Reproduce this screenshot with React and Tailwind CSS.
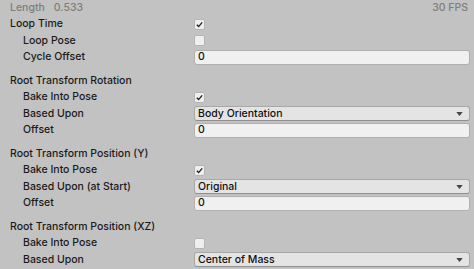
function CheckBox({ checked }) {
  return (
    <div className="w-[11px] h-[11px] rounded-[2px] bg-[#efefef] border border-[#b4b4b4] flex items-center justify-center">
      {checked && (
        <svg viewBox="0 0 10 10" className="w-[9px] h-[9px]">
          <path d="M2 5.4 L4 7.3 L8 2.6" fill="none" stroke="#1e1e1e" strokeWidth="1.5" />
        </svg>
      )}
    </div>
  )
}

function TextField({ value }) {
  return (
    <div className="h-[15px] w-full rounded-[3px] bg-[#f0f0f0] border border-[#b0b0b0] flex items-center pl-[3px] text-[#111]">
      {value}
    </div>
  )
}

function Dropdown({ value }) {
  return (
    <div className="h-[15px] w-full rounded-[3px] bg-[#e4e4e4] border border-[#a8a8a8] border-b-[#8f8f8f] flex items-center justify-between pl-[3px] pr-[6px] text-[#111]">
      <span>{value}</span>
      <svg viewBox="0 0 8 5" className="w-[7px] h-[4px]">
        <path d="M0 0 L8 0 L4 5 Z" fill="#444" />
      </svg>
    </div>
  )
}

function Row({ label, indent, children }) {
  return (
    <div className="h-[16.5px] flex items-center">
      <div className={(indent ? 'pl-[23px]' : 'pl-[10px]') + ' w-[194px] shrink-0 text-[#1a1a1a] whitespace-nowrap'}>
        {label}
      </div>
      <div className="flex-1 pr-[4px] flex items-center">{children}</div>
    </div>
  )
}

export default function App() {
  return (
    <div
      className="w-[474px] h-[269px] bg-[#c2c2c2] overflow-hidden text-[10.5px] font-medium leading-none"
      style={{ fontFamily: 'Inter, "Noto Sans", sans-serif' }}
    >
      <div className="mt-[-0.5px]">
        {/* length header */}
        <div className="h-[16.5px] flex items-center justify-between pl-[10px] pr-[6px] text-[#7e7e7e]">
          <div className="flex gap-[9px]">
            <span>Length</span>
            <span>0.533</span>
          </div>
          <span>30 FPS</span>
        </div>

        <Row label="Loop Time"><CheckBox checked /></Row>
        <Row label="Loop Pose" indent><CheckBox /></Row>
        <Row label="Cycle Offset" indent><TextField value="0" /></Row>

        <div className="mt-[7px]">
          <Row label="Root Transform Rotation" />
          <Row label="Bake Into Pose" indent><CheckBox checked /></Row>
          <Row label="Based Upon" indent><Dropdown value="Body Orientation" /></Row>
          <Row label="Offset" indent><TextField value="0" /></Row>
        </div>

        <div className="mt-[7px]">
          <Row label="Root Transform Position (Y)" />
          <Row label="Bake Into Pose" indent><CheckBox checked /></Row>
          <Row label="Based Upon (at Start)" indent><Dropdown value="Original" /></Row>
          <Row label="Offset" indent><TextField value="0" /></Row>
        </div>

        <div className="mt-[7px]">
          <Row label="Root Transform Position (XZ)" />
          <Row label="Bake Into Pose" indent><CheckBox /></Row>
          <Row label="Based Upon" indent><Dropdown value="Center of Mass" /></Row>
        </div>
      </div>
    </div>
  )
}
